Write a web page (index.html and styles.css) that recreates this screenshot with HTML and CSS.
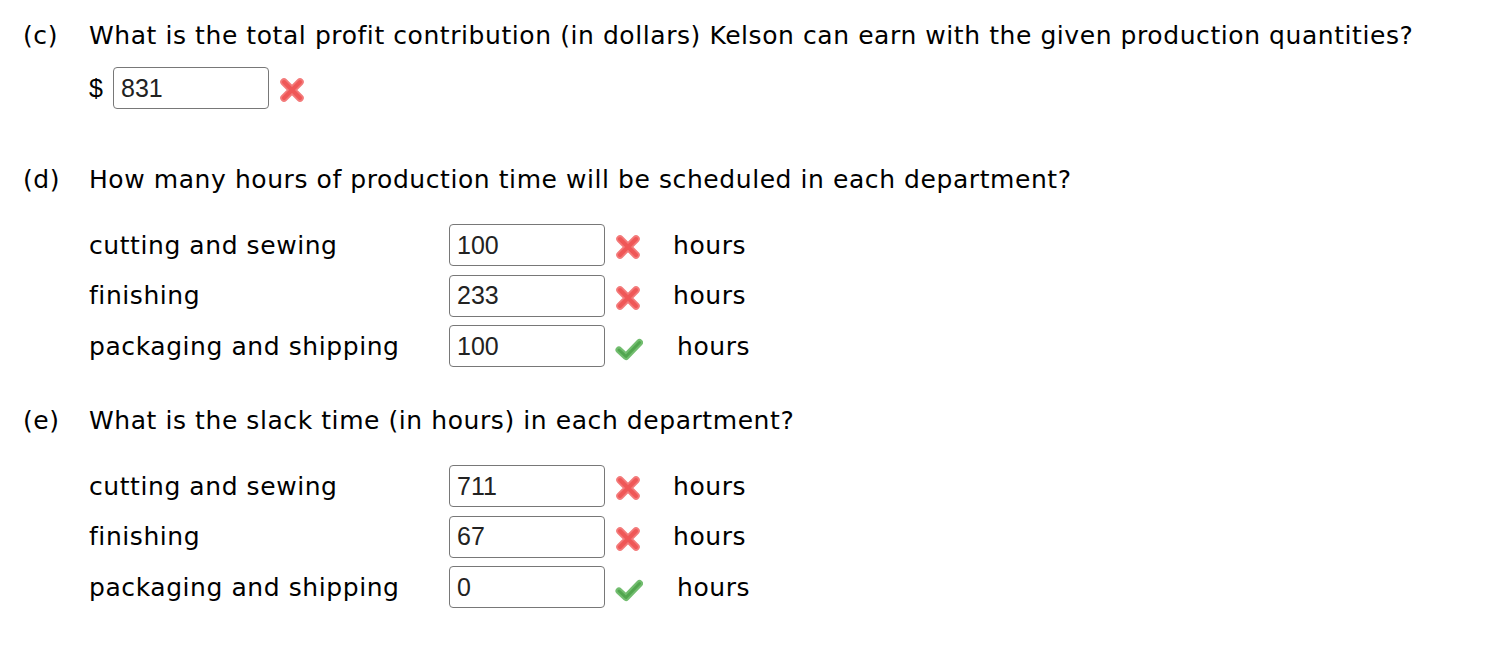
FILE: index.html
```html
<!DOCTYPE html>
<html>
<head>
<meta charset="utf-8">
<link rel="stylesheet" href="styles.css">
</head>
<body>
<div class="page">
  <section class="part part-c">
    <div class="q"><span class="tag">(c)</span><span class="qtext">What is the total profit contribution (in dollars) Kelson can earn with the given production quantities?</span></div>
    <div class="money">
      <span class="dollar">$</span>
      <span class="box box-sm">831</span>
      <svg class="ico ico-x" viewBox="0 0 26 24"><use href="#x"/></svg>
    </div>
  </section>

  <section class="part part-d">
    <div class="q"><span class="tag">(d)</span><span class="qtext">How many hours of production time will be scheduled in each department?</span></div>
    <div class="rows">
      <div class="row"><span class="lbl">cutting and sewing</span><span class="box">100</span><svg class="ico ico-x" viewBox="0 0 26 24"><use href="#x"/></svg><span class="unit">hours</span></div>
      <div class="row"><span class="lbl">finishing</span><span class="box">233</span><svg class="ico ico-x" viewBox="0 0 26 24"><use href="#x"/></svg><span class="unit">hours</span></div>
      <div class="row"><span class="lbl">packaging and shipping</span><span class="box">100</span><svg class="ico ico-ok" viewBox="0 0 28 24"><use href="#ok"/></svg><span class="unit unit-ok">hours</span></div>
    </div>
  </section>

  <section class="part part-e">
    <div class="q"><span class="tag">(e)</span><span class="qtext">What is the slack time (in hours) in each department?</span></div>
    <div class="rows">
      <div class="row"><span class="lbl">cutting and sewing</span><span class="box">711</span><svg class="ico ico-x" viewBox="0 0 26 24"><use href="#x"/></svg><span class="unit">hours</span></div>
      <div class="row"><span class="lbl">finishing</span><span class="box">67</span><svg class="ico ico-x" viewBox="0 0 26 24"><use href="#x"/></svg><span class="unit">hours</span></div>
      <div class="row"><span class="lbl">packaging and shipping</span><span class="box">0</span><svg class="ico ico-ok" viewBox="0 0 28 24"><use href="#ok"/></svg><span class="unit unit-ok">hours</span></div>
    </div>
  </section>
</div>

<svg width="0" height="0" class="defs">
  <defs>
    <g id="x">
      <path d="M5 4 L21 20 M21 4 L5 20" stroke="#f37a7a" stroke-width="7.5" stroke-linecap="round" fill="none"/>
      <path d="M5 4 L21 20 M21 4 L5 20" stroke="#ef5757" stroke-width="4" stroke-linecap="round" fill="none"/>
    </g>
    <g id="ok">
      <path d="M4 13 L11 19.5 L24.5 5.5" stroke="#72bd6f" stroke-width="7" stroke-linecap="round" stroke-linejoin="round" fill="none"/>
      <path d="M4 13 L11 19.5 L24.5 5.5" stroke="#52a64f" stroke-width="3" stroke-linecap="round" stroke-linejoin="round" fill="none"/>
    </g>
  </defs>
</svg>
</body>
</html>
```

FILE: styles.css
```css
html, body {
  margin: 0;
  padding: 0;
  background: #ffffff;
}
body {
  font-family: "DejaVu Sans", Verdana, sans-serif;
  font-size: 25px;
  letter-spacing: 0.57px;
  color: #000;
}
.page {
  padding: 20px 0 0 23px;
}
.defs {
  position: absolute;
  width: 0;
  height: 0;
}
.q {
  display: flex;
  align-items: center;
  height: 32px;
  line-height: 32px;
}
.tag {
  width: 66px;
  flex: none;
}
.money {
  display: flex;
  align-items: center;
  margin: 15px 0 0 66px;
}
.dollar {
  width: 24px;
  font-family: "Liberation Sans", Arial, sans-serif;
  font-size: 25px;
  letter-spacing: 0;
}
.box {
  box-sizing: border-box;
  width: 156px;
  height: 42px;
  border: 1.5px solid #787878;
  border-radius: 4px;
  font-family: "Liberation Sans", Arial, sans-serif;
  font-size: 25px;
  letter-spacing: 0;
  color: #222;
  display: flex;
  align-items: center;
  padding-left: 7px;
  background: #fff;
}
.ico {
  flex: none;
}
.ico-x {
  width: 26px;
  height: 24px;
  margin: 4px 0 0 10px;
}
.ico-ok {
  width: 28px;
  height: 24px;
  margin: 6px 0 0 10px;
}
.part-d {
  margin-top: 55px;
}
.part-e {
  margin-top: 38px;
}
.rows {
  margin: 28px 0 0 66px;
  display: flex;
  flex-direction: column;
  gap: 8.5px;
}
.row {
  display: flex;
  align-items: center;
}
.lbl {
  width: 360px;
  flex: none;
}
.unit {
  margin-left: 32px;
}
.unit-ok {
  margin-left: 34px;
}
```
